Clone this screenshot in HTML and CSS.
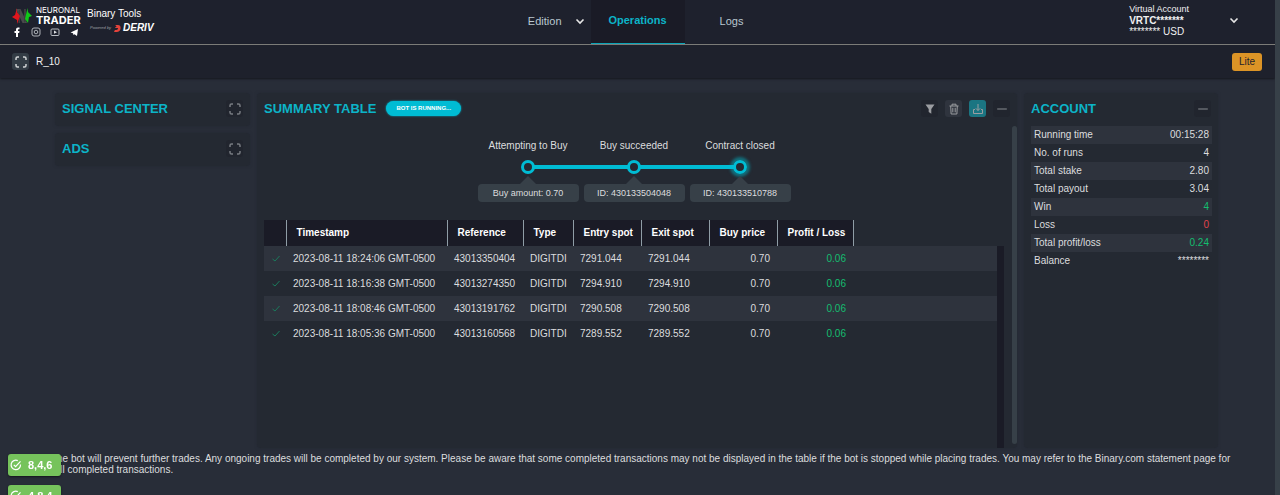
FILE: index.html
```html
<!DOCTYPE html>
<html lang="en">
<head>
    <meta charset="UTF-8">
    <meta name="viewport" content="width=device-width, initial-scale=1.0">
    <title>Binary Tools</title>
    <link rel="stylesheet" href="styles.css">
</head>
<body>
    <!-- Shared icons -->
    <svg class="sprite" aria-hidden="true">
        <symbol id="icon-expand" viewBox="0 0 12 12">
            <path d="M1 4V2.5Q1 1 2.5 1H4M8 1h1.5Q11 1 11 2.5V4M11 8v1.5Q11 11 9.500 11H8M4 11H2.500Q1 11 1 9.500V8" fill="none" stroke="currentColor" stroke-width="1.5"/>
        </symbol>
        <symbol id="icon-chevron" viewBox="0 0 10 10">
            <path d="M1.500 3.500L5 7l3.500-3.500" fill="none" stroke="currentColor" stroke-width="1.600"/>
        </symbol>
        <symbol id="icon-minus" viewBox="0 0 10 10">
            <path d="M1 5h8" stroke="currentColor" stroke-width="1"/>
        </symbol>
        <symbol id="icon-check" viewBox="0 0 10 10">
            <path d="M1.500 5L4 7 8.500 2" fill="none" stroke="currentColor" stroke-width="1"/>
        </symbol>
        <symbol id="icon-done" viewBox="0 0 12 12">
            <path d="M10.500 5.500A4.700 4.700 0 1 1 7.800 1.600M3.800 5.800L5.600 7.600 10.500 2.300" fill="none" stroke="currentColor" stroke-width="1.200"/>
        </symbol>
    </svg>

    <header class="topbar">
        <div class="brand">
            <div class="brand-main">
                <div class="logo">
                    <svg class="logo-mark" viewBox="0 0 20 16">
                        <path d="M4 1h4.500l6.500 14h-4.500z" fill="#4a4a4c"/>
                        <path d="M6.500 3.500L8 1v14H6.500zM12 1h2v12l-2 2z" fill="#3c3d40"/>
                        <path d="M5 0v4l3 4-3 8V12L0 9l3-2z" fill="#e0161d"/>
                        <path d="M15.500 0L16 4l4 4-3 1-1 6-3-4z" fill="#10c818"/>
                    </svg>
                    <div class="logo-text">
                        <span>NEURONAL</span>
                        <strong>TRADER</strong>
                    </div>
                </div>
                <div class="social">
                    <a href="#" aria-label="Facebook"><svg viewBox="0 0 10 10"><path d="M4 10V6H2.500V4H4V2.500Q4 0.500 6 0.500h1.500v1.800H6.500Q6 2.300 6 3v1h1.500L7.200 6H6v4z" fill="#fff"/></svg></a>
                    <a href="#" aria-label="Instagram"><svg viewBox="0 0 10 10"><rect x="1" y="1" width="8" height="8" rx="2" fill="none" stroke="#aeb2b8"/><circle cx="5" cy="5" r="1.800" fill="none" stroke="#aeb2b8"/></svg></a>
                    <a href="#" aria-label="YouTube"><svg viewBox="0 0 10 10"><rect x="1" y="2" width="8" height="6.500" rx="1" fill="none" stroke="#b9bdc3"/><path d="M4 3.500v3.300L7 5.200z" fill="#dfe1e4"/></svg></a>
                    <a href="#" aria-label="Telegram"><svg viewBox="0 0 10 10"><path d="M1.500 5.500L9 2 8 9 5.500 7.200 4.500 8 4 6.300z" fill="#fff"/></svg></a>
                </div>
            </div>
            <div class="product">
                <span class="product-name">Binary Tools</span>
                <div class="powered">
                    <span class="powered-by">Powered by</span>
                    <svg viewBox="0 0 8 8"><path d="M1.500 0h3Q8 0.300 7.500 4T3 8H0l1-2.200h1.500Q4.500 5.500 4.800 3.500H1l1-1.200h1z" fill="#e5433b"/></svg>
                    <span class="deriv">DERIV</span>
                </div>
            </div>
        </div>

        <nav class="nav">
            <a href="#" class="nav-edition">Edition <svg class="chevron"><use href="#icon-chevron"/></svg></a>
            <a href="#" class="active">Operations</a>
            <a href="#">Logs</a>
        </nav>

        <button class="account-menu" type="button">
            <span class="account-info">
                <small>Virtual Account</small>
                <strong>VRTC*******</strong>
                <span>******** USD</span>
            </span>
            <svg class="chevron"><use href="#icon-chevron"/></svg>
        </button>
    </header>

    <div class="subbar">
        <button class="icon-button slate" type="button" aria-label="Expand"><svg><use href="#icon-expand"/></svg></button>
        <span class="symbol">R_10</span>
        <span class="plan">Lite</span>
    </div>

    <main class="dashboard">
        <div class="side">
            <section class="panel">
                <div class="panel-head">
                    <h2>SIGNAL CENTER</h2>
                    <button class="icon-button" type="button" aria-label="Expand signal center"><svg><use href="#icon-expand"/></svg></button>
                </div>
            </section>
            <section class="panel">
                <div class="panel-head">
                    <h2>ADS</h2>
                    <button class="icon-button" type="button" aria-label="Expand ads"><svg><use href="#icon-expand"/></svg></button>
                </div>
            </section>
        </div>

        <section class="panel summary">
            <div class="panel-head">
                <h2>SUMMARY TABLE</h2>
                <span class="running">BOT IS RUNNING...</span>
                <div class="actions">
                    <button class="icon-button light" type="button" aria-label="Filter"><svg viewBox="0 0 12 12"><path d="M1.500 1.500h9L7.300 6v4.800L4.700 9V6z" fill="currentColor"/></svg></button>
                    <button class="icon-button light trash" type="button" aria-label="Delete"><svg viewBox="0 0 12 12"><path d="M1.500 3h9M4 3V1.200h4V3M2.700 3l.4 8h5.800l.4-8M4.800 4.800v4.500M7.200 4.800v4.500" fill="none" stroke="currentColor"/></svg></button>
                    <button class="icon-button light download" type="button" aria-label="Download"><svg viewBox="0 0 12 12"><path d="M6 1v6.500M3.800 5.300L6 7.500l2.200-2.200M3 6.500H1.500V10.500h9v-4H9" fill="none" stroke="currentColor"/></svg></button>
                    <button class="icon-button" type="button" aria-label="Collapse summary"><svg><use href="#icon-minus"/></svg></button>
                </div>
            </div>

            <div class="summary-scroll">
                <!-- Contract progress -->
                <ol class="steps">
                    <li><span>Attempting to Buy</span><i class="dot"></i><b class="chip">Buy amount: 0.70</b></li>
                    <li><span>Buy succeeded</span><i class="dot"></i><b class="chip">ID: 430133504048</b></li>
                    <li class="current"><span>Contract closed</span><i class="dot"></i><b class="chip">ID: 430133510788</b></li>
                </ol>

                <div class="table-wrap">
                    <table class="trades">
                        <colgroup>
                            <col class="col-check"><col class="col-time"><col class="col-ref"><col class="col-type">
                            <col class="col-spot"><col class="col-spot"><col class="col-spot"><col class="col-ref"><col>
                        </colgroup>
                        <thead>
                            <tr>
                                <th></th>
                                <th>Timestamp</th>
                                <th>Reference</th>
                                <th>Type</th>
                                <th>Entry spot</th>
                                <th>Exit spot</th>
                                <th>Buy price</th>
                                <th>Profit / Loss</th>
                                <td></td>
                            </tr>
                        </thead>
                        <tbody>
                            <tr>
                                <td class="check"><svg><use href="#icon-check"/></svg></td>
                                <td>2023-08-11 18:24:06 GMT-0500</td>
                                <td>43013350404</td>
                                <td>DIGITDI</td>
                                <td>7291.044</td>
                                <td>7291.044</td>
                                <td class="num">0.70</td>
                                <td class="num gain">0.06</td>
                                <td></td>
                            </tr>
                            <tr>
                                <td class="check"><svg><use href="#icon-check"/></svg></td>
                                <td>2023-08-11 18:16:38 GMT-0500</td>
                                <td>43013274350</td>
                                <td>DIGITDI</td>
                                <td>7294.910</td>
                                <td>7294.910</td>
                                <td class="num">0.70</td>
                                <td class="num gain">0.06</td>
                                <td></td>
                            </tr>
                            <tr>
                                <td class="check"><svg><use href="#icon-check"/></svg></td>
                                <td>2023-08-11 18:08:46 GMT-0500</td>
                                <td>43013191762</td>
                                <td>DIGITDI</td>
                                <td>7290.508</td>
                                <td>7290.508</td>
                                <td class="num">0.70</td>
                                <td class="num gain">0.06</td>
                                <td></td>
                            </tr>
                            <tr>
                                <td class="check"><svg><use href="#icon-check"/></svg></td>
                                <td>2023-08-11 18:05:36 GMT-0500</td>
                                <td>43013160568</td>
                                <td>DIGITDI</td>
                                <td>7289.552</td>
                                <td>7289.552</td>
                                <td class="num">0.70</td>
                                <td class="num gain">0.06</td>
                                <td></td>
                            </tr>
                        </tbody>
                    </table>
                    <div class="table-track"></div>
                </div>
                <div class="panel-thumb"></div>
            </div>
        </section>

        <section class="panel account">
            <div class="panel-head">
                <h2>ACCOUNT</h2>
                <button class="icon-button" type="button" aria-label="Collapse account"><svg><use href="#icon-minus"/></svg></button>
            </div>
            <table class="stats">
                <tr><th>Running time</th><td>00:15:28</td></tr>
                <tr><th>No. of runs</th><td>4</td></tr>
                <tr><th>Total stake</th><td>2.80</td></tr>
                <tr><th>Total payout</th><td>3.04</td></tr>
                <tr><th>Win</th><td class="gain">4</td></tr>
                <tr><th>Loss</th><td class="loss">0</td></tr>
                <tr><th>Total profit/loss</th><td class="gain">0.24</td></tr>
                <tr><th>Balance</th><td>********</td></tr>
            </table>
        </section>
    </main>

    <footer class="note">
        Stopping the bot will prevent further trades. Any ongoing trades will be completed by our system. Please be aware that some completed transactions may not be displayed in the table if the bot is stopped while placing trades. You may refer to the Binary.com statement page for details of all completed transactions.
    </footer>

    <!-- Notifications over the page -->
    <div class="toasts">
        <div class="toast"><svg><use href="#icon-done"/></svg>8,4,6</div>
        <div class="toast"><svg><use href="#icon-done"/></svg>4,8,4</div>
    </div>
</body>
</html>
```
FILE: styles.css
```css
* {
    box-sizing: border-box;
}

html {
    height: 100%;
    overflow: hidden;
}

body {
    margin: 0;
    min-height: 100%;
    background-color: #282d38;
    border-right: 5px solid #374048;
    color: #dcdddf;
    font-family: "Liberation Sans", Arial, sans-serif;
    font-size: 10px;
    line-height: 12px;
}

a {
    color: inherit;
    text-decoration: none;
}

button {
    border: none;
    padding: 0;
    background: none;
    color: inherit;
    font: inherit;
    cursor: pointer;
}

svg {
    display: block;
}

.sprite {
    position: absolute;
    width: 0;
    height: 0;
}

/* Top bar */
.topbar {
    display: grid;
    grid-template-columns: 1fr auto 1fr;
    height: 45px;
    background-color: #1e212d;
    border-bottom: 1px solid #85857f;
}

.brand {
    display: flex;
    gap: 7px;
    padding: 6px 0 0 12px;
}

.logo {
    display: flex;
    align-items: center;
    gap: 4px;
}

.logo-mark {
    width: 20px;
    height: 16px;
}

.logo-text {
    display: flex;
    flex-direction: column;
    width: 44px;
    color: #fff;
    font-family: Inter, "Liberation Sans", sans-serif;
    font-size: 8px;
    line-height: 9px;
}

.logo-text strong {
    font-size: 11px;
    line-height: 11px;
}

.social {
    display: flex;
    gap: 9px;
    margin-top: 1px;
}

.social svg {
    width: 10px;
    height: 10px;
}

.product {
    padding-top: 2px;
}

.product-name {
    color: #fff;
}

.powered {
    display: flex;
    align-items: center;
    gap: 2px;
    margin-top: 2px;
    padding-left: 3px;
}

.powered svg {
    width: 7px;
    height: 7px;
}

.powered-by {
    width: 22px;
    color: #a2a4a9;
    font-size: 4px;
    font-style: italic;
}

.deriv {
    color: #fff;
    font-size: 10px;
    font-style: italic;
    font-weight: bold;
}

.nav {
    display: grid;
    grid-template-columns: 94px 94px 94px;
    color: #b9c7d0;
    font-size: 11px;
}

.nav a {
    display: flex;
    align-items: center;
    justify-content: center;
    padding-bottom: 3px;
}

.nav .nav-edition {
    justify-content: flex-end;
    gap: 13px;
    padding-right: 6px;
}

.nav .active {
    border-bottom: 1px solid #0ba5b8;
    background-color: #1a1b26;
    color: #0cb4c8;
    font-weight: bold;
}

.chevron {
    width: 10px;
    height: 10px;
    color: #e6e6e6;
}

.account-menu {
    display: flex;
    align-items: center;
    justify-self: end;
    gap: 40px;
    padding: 0 36px 4px 0;
    color: #f0f0f1;
    text-align: left;
}

.account-info {
    display: flex;
    flex-direction: column;
    line-height: 11px;
}

.account-info small {
    font-size: 9px;
}

/* Symbol bar */
.subbar {
    display: flex;
    align-items: center;
    gap: 7px;
    height: 33px;
    padding: 0 13px 0 12px;
    background-color: #1e212c;
    box-shadow: 0 1px 2px #15171e;
    color: #f0f0f1;
}

.plan {
    margin-left: auto;
    padding: 3px 7px;
    border-radius: 3px;
    background-color: #dc9426;
    color: #1e212c;
}

.icon-button {
    display: grid;
    place-items: center;
    width: 17px;
    height: 17px;
    border-radius: 3px;
    background-color: #21252e;
    color: #777b81;
}

.icon-button svg {
    width: 12px;
    height: 12px;
}

.slate {
    background-color: #333c45;
    color: #d0d2d4;
}

.light {
    color: #9b9da1;
}

.trash {
    background-color: #2f343e;
}

.download {
    background-color: #1b7582;
}

/* Panels */
.dashboard {
    display: grid;
    grid-template-columns: 195px 1fr 194px;
    gap: 7px;
    min-height: 355px;
    margin-top: 15px;
    padding: 0 57px 0 55px;
}

.side {
    display: flex;
    flex-direction: column;
    gap: 7px;
}

.panel {
    border-radius: 4px;
    background-color: #242932;
    box-shadow: 0 0 3px #242932;
}

.panel-head {
    display: flex;
    align-items: center;
    gap: 10px;
    height: 33px;
    padding: 0 7px 2px;
}

.panel-head > .icon-button {
    margin-left: auto;
}

h2 {
    margin: 0;
    color: #0cb4c8;
    font-size: 13px;
    line-height: 16px;
}

.running {
    padding: 0 10px;
    border-radius: 8px;
    background-color: #00bcd4;
    box-shadow: 0 0 2px #00bcd4;
    color: #fff;
    font-size: 6px;
    font-weight: bold;
    line-height: 15px;
}

.actions {
    display: flex;
    gap: 7px;
    margin-left: auto;
}

.summary {
    display: flex;
    flex-direction: column;
}

.summary-scroll {
    display: grid;
    grid-template-columns: 1fr 5px;
    grid-template-rows: auto 1fr;
    column-gap: 8px;
    flex: 1;
    padding-left: 7px;
}

.panel-thumb {
    grid-column: 2;
    grid-row: 1 / 3;
    margin-bottom: 4px;
    border-radius: 3px;
    background-color: #374048;
}

/* Contract progress */
.steps {
    display: flex;
    justify-content: center;
    gap: 5px;
    margin: 0 0 18px;
    padding: 14px 0 0;
    list-style: none;
}

.steps li {
    display: flex;
    flex-direction: column;
    align-items: center;
    position: relative;
    width: 101px;
}

.steps li + li::before {
    content: "";
    position: absolute;
    top: 25px;
    right: 56px;
    width: 95px;
    height: 4px;
    background-color: #00bcd4;
}

.dot {
    width: 14px;
    height: 14px;
    margin-top: 8px;
    border: 3px solid #00bcd4;
    border-radius: 50%;
}

.current .dot {
    box-shadow: 0 0 3px 3px #12707d;
}

.chip {
    position: relative;
    width: 101px;
    margin-top: 10px;
    border-radius: 4px;
    background-color: #374048;
    font-size: 9px;
    font-weight: normal;
    line-height: 18px;
    text-align: center;
}

.chip::before {
    content: "";
    position: absolute;
    top: -8px;
    left: 42px;
    border: 8px solid transparent;
    border-top: none;
    border-bottom-color: #374048;
}

/* Trades */
.table-wrap {
    display: flex;
}

.trades {
    flex: 1;
    align-self: flex-start;
    width: 100%;
    border-collapse: collapse;
    table-layout: fixed;
    white-space: nowrap;
}

.col-check {
    width: 22px;
}

.col-time {
    width: 161px;
}

.col-ref {
    width: 76px;
}

.col-type {
    width: 50px;
}

.col-spot {
    width: 68px;
}

.trades th {
    height: 26px;
    padding: 0 0 0 10px;
    border-right: 1px solid #8f9da6;
    background-color: #1a1b26;
    color: #fff;
    text-align: left;
}

.trades td {
    height: 25px;
    padding: 0 7px;
}

.trades tbody tr:nth-child(odd),
.stats tr:nth-child(odd) {
    background-color: #2e333d;
}

.trades .num {
    text-align: right;
}

.check svg {
    width: 10px;
    height: 10px;
    color: #1b7a5c;
}

.trades .gain,
.stats .gain {
    color: #14bd70;
}

.loss {
    color: #e0434b;
}

.table-track {
    width: 7px;
    margin-top: 26px;
    background-color: #1a1b26;
}

/* Account */
.stats {
    width: calc(100% - 13px);
    margin-left: 7px;
    border-collapse: collapse;
}

.stats th,
.stats td {
    height: 18px;
    padding: 0 3px;
    font-weight: normal;
    text-align: left;
}

.stats td {
    text-align: right;
}

.note {
    padding: 5px 20px 20px 12px;
    line-height: 11px;
}

/* Notifications */
.toasts {
    position: fixed;
    top: 454px;
    left: 8px;
}

.toast {
    display: flex;
    align-items: center;
    gap: 6px;
    width: 53px;
    height: 22px;
    margin-bottom: 9px;
    padding-left: 2px;
    border-radius: 3px;
    background-color: #76c35c;
    box-shadow: 0 1px 2px #15171e;
    color: #fff;
    font-size: 11px;
    font-weight: bold;
}

.toast svg {
    width: 12px;
    height: 12px;
}
```
